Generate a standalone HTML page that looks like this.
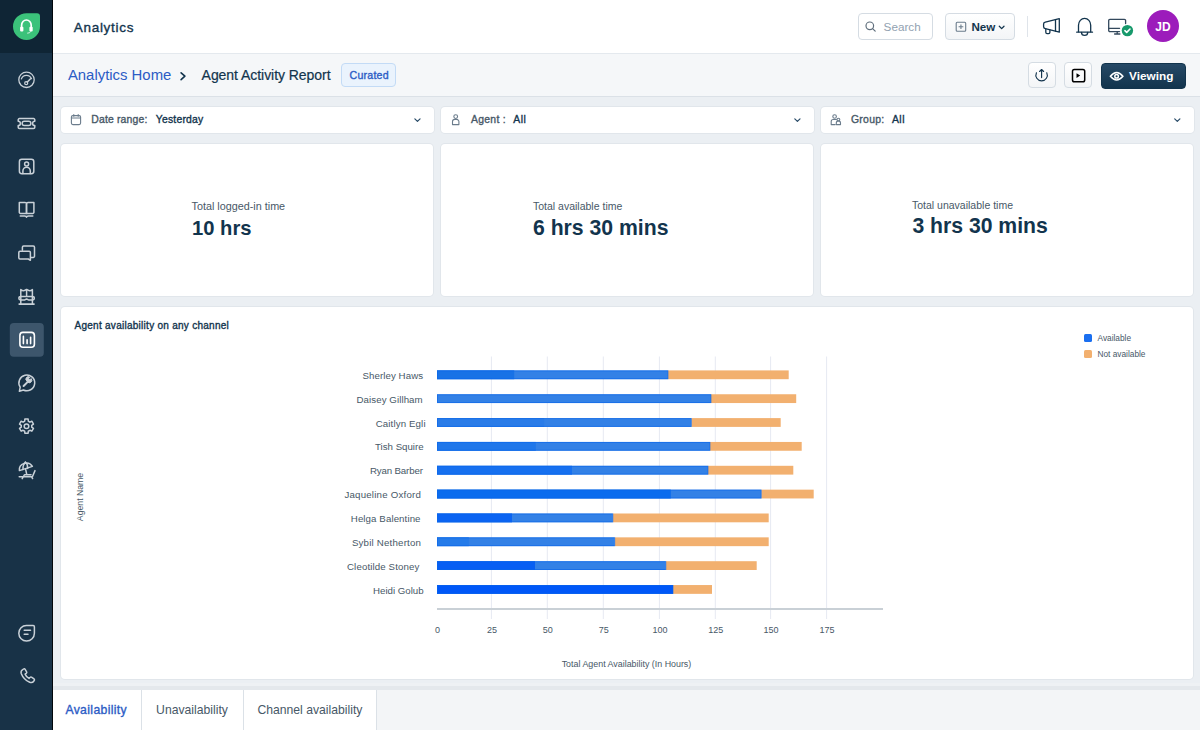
<!DOCTYPE html>
<html><head><meta charset="utf-8">
<style>
*{box-sizing:border-box;margin:0;padding:0}
html,body{width:1200px;height:730px;overflow:hidden;font-family:"Liberation Sans",sans-serif;background:#ebeff3;color:#12344d}
.a{position:absolute}
.t{position:absolute;white-space:nowrap}
svg{position:absolute;left:0;top:0;overflow:visible}
.box{position:absolute;background:#fff;border-radius:4px;box-shadow:0 0 0 1px #e1e6eb}
</style></head><body>
<div class="a" style="left:0;top:0;width:52px;height:730px;background:#183247"></div>
<div class="a" style="left:0;top:0;width:52px;height:53px;background:#0f2535"></div>
<div class="a" style="left:52px;top:0;width:1px;height:730px;background:#02070b"></div>
<div class="a" style="left:53px;top:0;width:1147px;height:54px;background:#fff;border-bottom:1px solid #e4e9ee"></div>
<div class="a" style="left:53px;top:54px;width:1147px;height:43px;background:#f5f7f9;border-bottom:1px solid #dbe1e7"></div>
<div class="box" style="left:61px;top:107px;width:373px;height:26px"></div>
<div class="box" style="left:61px;top:144px;width:372px;height:152px"></div>
<div class="box" style="left:441px;top:107px;width:373px;height:26px"></div>
<div class="box" style="left:441px;top:144px;width:372px;height:152px"></div>
<div class="box" style="left:821px;top:107px;width:373px;height:26px"></div>
<div class="box" style="left:821px;top:144px;width:372px;height:152px"></div>
<div class="box" style="left:61px;top:306.5px;width:1132px;height:372.5px"></div>
<div class="a" style="left:53px;top:683px;width:1147px;height:3px;background:#eef1f4"></div>
<div class="a" style="left:53px;top:686px;width:1147px;height:4px;background:#e4e8ec"></div>
<div class="a" style="left:53px;top:690px;width:1147px;height:40px;background:#f3f5f7"></div>
<div class="a" style="left:53px;top:690px;width:89px;height:40px;background:#fff;border-right:1px solid #dbe1e7"></div>
<div class="a" style="left:142px;top:690px;width:102px;height:40px;background:#fff;border-right:1px solid #dbe1e7"></div>
<div class="a" style="left:244px;top:690px;width:133px;height:40px;background:#fff;border-right:1px solid #dbe1e7"></div>
<div class="t" style="left:65.40px;top:704px;font-size:12.2px;line-height:12.2px;color:#2c5cc5;font-weight:normal;-webkit-text-stroke:0.35px #2c5cc5;letter-spacing:0.36px;">Availability</div>
<div class="t" style="left:156.10px;top:704px;font-size:12.2px;line-height:12.2px;color:#475867;font-weight:normal;">Unavailability</div>
<div class="t" style="left:257.40px;top:704px;font-size:12.2px;line-height:12.2px;color:#475867;font-weight:normal;">Channel availability</div>
<div class="t" style="left:73.80px;top:21px;font-size:13.5px;line-height:13.5px;color:#12344d;font-weight:normal;-webkit-text-stroke:0.35px #12344d;letter-spacing:0.7px;">Analytics</div>
<div class="a" style="left:858px;top:13px;width:75px;height:27px;border:1px solid #d5dce3;border-radius:4px;background:#fff"></div>
<div class="t" style="left:883.60px;top:21px;font-size:11.7px;line-height:11.7px;color:#92a2b1;font-weight:normal;">Search</div>
<div class="a" style="left:945px;top:13px;width:70px;height:27px;border:1px solid #d5dce3;border-radius:4px;background:linear-gradient(#fff,#f3f5f7)"></div>
<div class="t" style="left:971.50px;top:21px;font-size:11.6px;line-height:11.6px;color:#12344d;font-weight:bold;">New</div>
<div class="a" style="left:1027px;top:16px;width:1px;height:21px;background:#dfe4ea"></div>
<div class="a" style="left:1147px;top:10px;width:32px;height:32px;border-radius:50%;background:#9c1cbb"></div>
<div class="t" style="left:1063.00px;width:200px;text-align:center;top:21px;font-size:12px;line-height:12px;color:#fff;font-weight:bold;">JD</div>
<div class="t" style="left:67.90px;top:68px;font-size:14.9px;line-height:14.9px;color:#2c5cc5;font-weight:normal;">Analytics Home</div>
<div class="t" style="left:201.60px;top:68px;font-size:14px;line-height:14px;color:#12344d;font-weight:normal;-webkit-text-stroke:0.2px #12344d;letter-spacing:-0.05px;">Agent Activity Report</div>
<div class="a" style="left:341px;top:63px;width:55px;height:24px;border:1px solid #c3dbf6;border-radius:4px;background:#eaf3fd"></div>
<div class="t" style="left:349.60px;top:70px;font-size:10.6px;line-height:10.6px;color:#2c5cc5;font-weight:normal;-webkit-text-stroke:0.35px #2c5cc5;letter-spacing:0.22px;">Curated</div>
<div class="a" style="left:1028px;top:62px;width:28px;height:26px;border:1px solid #d5dce3;border-radius:4px;background:linear-gradient(#fff,#f3f5f7)"></div>
<div class="a" style="left:1064px;top:62px;width:28px;height:26px;border:1px solid #d5dce3;border-radius:4px;background:linear-gradient(#fff,#f3f5f7)"></div>
<div class="a" style="left:1101px;top:63px;width:85px;height:26px;border:1px solid #12344d;border-radius:4px;background:linear-gradient(#264966,#12344d)"></div>
<div class="t" style="left:1129.00px;top:71px;font-size:11.8px;line-height:11.8px;color:#fff;font-weight:bold;">Viewing</div>
<div class="t" style="left:91.30px;top:115px;font-size:10.4px;line-height:10.4px;color:#475867;font-weight:normal;-webkit-text-stroke:0.35px #475867;letter-spacing:0.17px;">Date range:</div>
<div class="t" style="left:155.70px;top:115px;font-size:10.4px;line-height:10.4px;color:#12344d;font-weight:normal;-webkit-text-stroke:0.35px #12344d;letter-spacing:0.22px;">Yesterday</div>
<div class="t" style="left:471.00px;top:115px;font-size:10.4px;line-height:10.4px;color:#475867;font-weight:normal;-webkit-text-stroke:0.35px #475867;letter-spacing:0.29px;">Agent :</div>
<div class="t" style="left:513.30px;top:115px;font-size:10.4px;line-height:10.4px;color:#12344d;font-weight:normal;-webkit-text-stroke:0.35px #12344d;letter-spacing:0.5px;">All</div>
<div class="t" style="left:851.00px;top:115px;font-size:10.4px;line-height:10.4px;color:#475867;font-weight:normal;-webkit-text-stroke:0.35px #475867;letter-spacing:0.27px;">Group:</div>
<div class="t" style="left:891.90px;top:115px;font-size:10.4px;line-height:10.4px;color:#12344d;font-weight:normal;-webkit-text-stroke:0.35px #12344d;letter-spacing:0.5px;">All</div>
<div class="t" style="left:191.50px;top:201px;font-size:10.8px;line-height:10.8px;color:#475867;font-weight:normal;">Total logged-in time</div>
<div class="t" style="left:192.00px;top:218px;font-size:20.2px;line-height:20.2px;color:#12344d;font-weight:bold;">10 hrs</div>
<div class="t" style="left:533.00px;top:201px;font-size:10.5px;line-height:10.5px;color:#475867;font-weight:normal;">Total available time</div>
<div class="t" style="left:533.00px;top:217px;font-size:21.2px;line-height:21.2px;color:#12344d;font-weight:bold;">6 hrs 30 mins</div>
<div class="t" style="left:912.00px;top:200px;font-size:10.5px;line-height:10.5px;color:#475867;font-weight:normal;">Total unavailable time</div>
<div class="t" style="left:912.40px;top:215px;font-size:21.2px;line-height:21.2px;color:#12344d;font-weight:bold;">3 hrs 30 mins</div>
<div class="t" style="left:74.50px;top:321px;font-size:10px;line-height:10px;color:#12344d;font-weight:normal;-webkit-text-stroke:0.35px #12344d;letter-spacing:0.27px;">Agent availability on any channel</div>
<svg width="1200" height="730" style="left:0;top:0">
<line x1="491.4" y1="356.5" x2="491.4" y2="619" stroke="#e6e9f2" stroke-width="1"/>
<line x1="547.3" y1="356.5" x2="547.3" y2="619" stroke="#e6e9f2" stroke-width="1"/>
<line x1="603.3" y1="356.5" x2="603.3" y2="619" stroke="#e6e9f2" stroke-width="1"/>
<line x1="659.4" y1="356.5" x2="659.4" y2="619" stroke="#e6e9f2" stroke-width="1"/>
<line x1="715.3" y1="356.5" x2="715.3" y2="619" stroke="#e6e9f2" stroke-width="1"/>
<line x1="770.6" y1="356.5" x2="770.6" y2="619" stroke="#e6e9f2" stroke-width="1"/>
<line x1="826.6" y1="356.5" x2="826.6" y2="619" stroke="#e6e9f2" stroke-width="1"/>
<line x1="437" y1="609" x2="883" y2="609" stroke="#c9d0d6" stroke-width="2"/>
<rect x="668" y="370.4" width="120.70000000000005" height="8.8" fill="#f2b06f"/>
<rect x="437" y="370.4" width="231" height="8.8" fill="#3381e6"/>
<rect x="437" y="370.4" width="77.20000000000005" height="8.8" fill="#1872e6"/>
<rect x="437.5" y="370.9" width="230.5" height="7.800000000000001" fill="none" stroke="#0a66ea" stroke-width="1" stroke-opacity="0.6"/>
<rect x="711" y="394.25" width="85.20000000000005" height="8.8" fill="#f2b06f"/>
<rect x="437" y="394.25" width="274" height="8.8" fill="#3381e6"/>
<rect x="437.5" y="394.75" width="273.5" height="7.800000000000001" fill="none" stroke="#0a66ea" stroke-width="1" stroke-opacity="0.6"/>
<rect x="691.3" y="418.09999999999997" width="89.40000000000009" height="8.8" fill="#f2b06f"/>
<rect x="437" y="418.09999999999997" width="254.29999999999995" height="8.8" fill="#3381e6"/>
<rect x="437" y="418.09999999999997" width="107.20000000000005" height="8.8" fill="#2a7ce8"/>
<rect x="437.5" y="418.59999999999997" width="253.79999999999995" height="7.800000000000001" fill="none" stroke="#0a66ea" stroke-width="1" stroke-opacity="0.6"/>
<rect x="710" y="441.95" width="91.70000000000005" height="8.8" fill="#f2b06f"/>
<rect x="437" y="441.95" width="273" height="8.8" fill="#3381e6"/>
<rect x="437" y="441.95" width="98.79999999999995" height="8.8" fill="#1f77ea"/>
<rect x="437.5" y="442.45" width="272.5" height="7.800000000000001" fill="none" stroke="#0a66ea" stroke-width="1" stroke-opacity="0.6"/>
<rect x="708" y="465.79999999999995" width="85.29999999999995" height="8.8" fill="#f2b06f"/>
<rect x="437" y="465.79999999999995" width="271" height="8.8" fill="#3381e6"/>
<rect x="437" y="465.79999999999995" width="135" height="8.8" fill="#1670ef"/>
<rect x="437.5" y="466.29999999999995" width="270.5" height="7.800000000000001" fill="none" stroke="#0a66ea" stroke-width="1" stroke-opacity="0.6"/>
<rect x="761.2" y="489.65" width="52.5" height="8.8" fill="#f2b06f"/>
<rect x="437" y="489.65" width="324.20000000000005" height="8.8" fill="#3381e6"/>
<rect x="437" y="489.65" width="233.79999999999995" height="8.8" fill="#0a6cee"/>
<rect x="437.5" y="490.15" width="323.70000000000005" height="7.800000000000001" fill="none" stroke="#0a66ea" stroke-width="1" stroke-opacity="0.6"/>
<rect x="612.8" y="513.5" width="155.9000000000001" height="8.8" fill="#f2b06f"/>
<rect x="437" y="513.5" width="175.79999999999995" height="8.8" fill="#3381e6"/>
<rect x="437" y="513.5" width="75" height="8.8" fill="#0b64f2"/>
<rect x="437.5" y="514.0" width="175.29999999999995" height="7.800000000000001" fill="none" stroke="#0a66ea" stroke-width="1" stroke-opacity="0.6"/>
<rect x="614.7" y="537.35" width="154.0" height="8.8" fill="#f2b06f"/>
<rect x="437" y="537.35" width="177.70000000000005" height="8.8" fill="#3381e6"/>
<rect x="437" y="537.35" width="31.80000000000001" height="8.8" fill="#257be9"/>
<rect x="437.5" y="537.85" width="177.20000000000005" height="7.800000000000001" fill="none" stroke="#0a66ea" stroke-width="1" stroke-opacity="0.6"/>
<rect x="665.8" y="561.2" width="90.90000000000009" height="8.8" fill="#f2b06f"/>
<rect x="437" y="561.2" width="228.79999999999995" height="8.8" fill="#3381e6"/>
<rect x="437" y="561.2" width="98" height="8.8" fill="#075ff3"/>
<rect x="437.5" y="561.7" width="228.29999999999995" height="7.800000000000001" fill="none" stroke="#0a66ea" stroke-width="1" stroke-opacity="0.6"/>
<rect x="673" y="585.05" width="39" height="8.8" fill="#f2b06f"/>
<rect x="437" y="585.05" width="236" height="8.8" fill="#3381e6"/>
<rect x="437" y="585.05" width="236" height="8.8" fill="#0057f8"/>
<rect x="437.5" y="585.55" width="235.5" height="7.800000000000001" fill="none" stroke="#0a66ea" stroke-width="1" stroke-opacity="0.6"/>
</svg>
<div class="t" style="left:362.50px;top:371px;font-size:9.7px;line-height:9.7px;color:#475867;font-weight:normal;letter-spacing:0.073px;">Sherley Haws</div>
<div class="t" style="left:356.50px;top:395px;font-size:9.7px;line-height:9.7px;color:#475867;font-weight:normal;letter-spacing:0.077px;">Daisey Gillham</div>
<div class="t" style="left:375.70px;top:419px;font-size:9.7px;line-height:9.7px;color:#475867;font-weight:normal;letter-spacing:0.127px;">Caitlyn Egli</div>
<div class="t" style="left:375.00px;top:442px;font-size:9.7px;line-height:9.7px;color:#475867;font-weight:normal;letter-spacing:0.0px;">Tish Squire</div>
<div class="t" style="left:370.00px;top:466px;font-size:9.7px;line-height:9.7px;color:#475867;font-weight:normal;letter-spacing:-0.15px;">Ryan Barber</div>
<div class="t" style="left:344.40px;top:490px;font-size:9.7px;line-height:9.7px;color:#475867;font-weight:normal;letter-spacing:0.213px;">Jaqueline Oxford</div>
<div class="t" style="left:350.80px;top:514px;font-size:9.7px;line-height:9.7px;color:#475867;font-weight:normal;letter-spacing:0.093px;">Helga Balentine</div>
<div class="t" style="left:351.90px;top:538px;font-size:9.7px;line-height:9.7px;color:#475867;font-weight:normal;letter-spacing:0.204px;">Sybil Netherton</div>
<div class="t" style="left:347.00px;top:562px;font-size:9.7px;line-height:9.7px;color:#475867;font-weight:normal;letter-spacing:0.12px;">Cleotilde Stoney</div>
<div class="t" style="left:373.00px;top:586px;font-size:9.7px;line-height:9.7px;color:#475867;font-weight:normal;letter-spacing:0.0px;">Heidi Golub</div>
<div class="t" style="left:337.50px;width:200px;text-align:center;top:626px;font-size:9px;line-height:9px;color:#475867;font-weight:normal;">0</div>
<div class="t" style="left:391.90px;width:200px;text-align:center;top:626px;font-size:9px;line-height:9px;color:#475867;font-weight:normal;">25</div>
<div class="t" style="left:447.80px;width:200px;text-align:center;top:626px;font-size:9px;line-height:9px;color:#475867;font-weight:normal;">50</div>
<div class="t" style="left:503.80px;width:200px;text-align:center;top:626px;font-size:9px;line-height:9px;color:#475867;font-weight:normal;">75</div>
<div class="t" style="left:559.90px;width:200px;text-align:center;top:626px;font-size:9px;line-height:9px;color:#475867;font-weight:normal;">100</div>
<div class="t" style="left:615.80px;width:200px;text-align:center;top:626px;font-size:9px;line-height:9px;color:#475867;font-weight:normal;">125</div>
<div class="t" style="left:671.10px;width:200px;text-align:center;top:626px;font-size:9px;line-height:9px;color:#475867;font-weight:normal;">150</div>
<div class="t" style="left:727.10px;width:200px;text-align:center;top:626px;font-size:9px;line-height:9px;color:#475867;font-weight:normal;">175</div>
<div class="t" style="left:561.70px;top:660px;font-size:8.9px;line-height:8.9px;color:#475867;font-weight:normal;">Total Agent Availability (In Hours)</div>
<div class="t" style="left:80px;top:497px;width:0;height:0"><div style="position:absolute;left:-30px;top:-5px;width:60px;text-align:center;font-size:8.7px;line-height:10px;color:#475867;transform:rotate(-90deg)">Agent Name</div></div>
<div class="a" style="left:1084px;top:334px;width:7.5px;height:7.5px;border-radius:1.5px;background:#1a6ff0"></div>
<div class="a" style="left:1084px;top:350px;width:7.5px;height:7.5px;border-radius:1.5px;background:#f2b06f"></div>
<div class="t" style="left:1097.50px;top:334px;font-size:8.3px;line-height:8.3px;color:#475867;font-weight:normal;">Available</div>
<div class="t" style="left:1097.50px;top:350px;font-size:8.3px;line-height:8.3px;color:#475867;font-weight:normal;">Not available</div>
<svg width="1200" height="730">
<path d="M13,26.6 A13.5,13.4 0 0 1 26.5,13.2 H37 A3,3 0 0 1 40,16.2 V26.6 A13.5,13.4 0 0 1 26.5,40 A13.5,13.4 0 0 1 13,26.6 Z" fill="#3bc27a"/>
<path d="M21.6,28.5 V25.2 A4.8,5.2 0 0 1 31.2,25.2 V28.5" fill="none" stroke="#fff" stroke-width="1.7"/>
<rect x="20.1" y="26.8" width="3.3" height="4.8" rx="1" fill="#fff"/><rect x="29.4" y="26.8" width="3.3" height="4.8" rx="1" fill="#fff"/>
<path d="M30.6,31.3 Q30.3,33.2 27.2,33.2" fill="none" stroke="#dff5e8" stroke-width="0.9"/>
<g fill="none" stroke="#c9d1d8" stroke-width="1.3" stroke-linecap="round"><circle cx="26.5" cy="79.8" r="7.7"/><path d="M21.4,78.9 A5.4,5.4 0 0 1 31.5,78.7"/><circle cx="26.2" cy="83.2" r="1.5"/><path d="M27.3,82.1 L30.3,78.9" stroke-width="1.5"/></g>
<g fill="none" stroke="#c9d1d8" stroke-width="1.5" stroke-linecap="round" stroke-linejoin="round"><path d="M19.4,118.6 H33.6 A1.2,1.2 0 0 1 34.8,119.8 V121.2 A2.2,2.2 0 0 0 34.8,125.6 V127.2 A1.2,1.2 0 0 1 33.6,128.4 H19.4 A1.2,1.2 0 0 1 18.2,127.2 V125.6 A2.2,2.2 0 0 0 18.2,121.2 V119.8 A1.2,1.2 0 0 1 19.4,118.6 Z"/><rect x="22.2" y="121.3" width="8.6" height="4.2" rx="2"/></g>
<g fill="none" stroke="#c9d1d8" stroke-width="1.5" stroke-linecap="round" stroke-linejoin="round"><rect x="19.4" y="159.3" width="14.4" height="14.4" rx="2.4"/><circle cx="26.6" cy="164" r="2"/><path d="M22.9,173.6 V171 A3.7,3.7 0 0 1 30.3,171 V173.6"/></g>
<g fill="none" stroke="#c9d1d8" stroke-width="1.5" stroke-linecap="round" stroke-linejoin="round"><path d="M19.3,202.4 H25 A1.5,1.5 0 0 1 26.5,203.9 V213.4 H20.4 A1.1,1.1 0 0 1 19.3,212.3 Z"/><path d="M33.9,202.4 H28 A1.5,1.5 0 0 0 26.5,203.9 V213.4 H32.8 A1.1,1.1 0 0 0 33.9,212.3 Z"/><path d="M20.3,216 H24.5 Q26.5,216 26.5,217.3 Q26.5,216 28.5,216 H32.8"/></g>
<g fill="none" stroke="#c9d1d8" stroke-width="1.5" stroke-linecap="round" stroke-linejoin="round"><path d="M22.4,250.2 V247.2 A1.2,1.2 0 0 1 23.6,246 H33.3 A1.2,1.2 0 0 1 34.5,247.2 V256.2 A1.2,1.2 0 0 1 33.3,257.4 H30.9"/><path d="M20,251.2 H29.2 A1.2,1.2 0 0 1 30.4,252.4 V260.3 L28.3,259 H20 A1.2,1.2 0 0 1 18.8,257.8 V252.4 A1.2,1.2 0 0 1 20,251.2 Z"/></g>
<g fill="none" stroke="#c9d1d8" stroke-width="1.5" stroke-linecap="round" stroke-linejoin="round"><path d="M20.8,303.6 V289.6 Q23.6,291.8 26.6,289.4 Q29.6,291.8 32.4,289.6 V303.6"/><path d="M26.6,290 V295.4"/><path d="M18.9,298.2 Q18.9,296.6 21,296.6 H32.2 Q34.3,296.6 34.3,298.2 Q34.3,299.9 32.2,299.9 H28.4 L26.6,299 L24.8,299.9 H21 Q18.9,299.9 18.9,298.2 Z"/><path d="M19.2,304.1 H34" stroke-width="1.7"/></g>
<rect x="9.8" y="323" width="34" height="33.7" rx="4" fill="#3d566c"/>
<g fill="none" stroke="#fff" stroke-width="1.6" stroke-linecap="round"><rect x="19.9" y="332.4" width="14.5" height="14.9" rx="3"/><path d="M23.4,336.4 V343.6 M27.1,339.8 V343.6 M30.6,337.2 V343.6"/></g>
<g fill="none" stroke="#c9d1d8" stroke-width="1.5" stroke-linecap="round" stroke-linejoin="round"><path d="M20.2,387.2 A7.9,7.9 0 1 1 23.4,390 L19.4,391.2 Z"/><path d="M23.6,386 L28,381.6" stroke-width="2"/><path d="M27.6,382 A2.4,2.4 0 0 0 31.1,378.6 L29.8,379.9 L28.6,378.7 L29.9,377.4 A2.4,2.4 0 0 0 26.6,380.9 Z" fill="#c9d1d8" stroke-width="1"/></g>
<g fill="none" stroke="#c9d1d8" stroke-width="1.5" stroke-linecap="round" stroke-linejoin="round"><path d="M23.85,421.61 L24.69,421.22 L24.86,419.09 L28.14,419.09 L28.31,421.22 L29.15,421.61 L29.91,422.14 L31.84,421.22 L33.48,424.07 L31.72,425.28 L31.80,426.20 L31.72,427.12 L33.48,428.33 L31.84,431.18 L29.91,430.26 L29.15,430.79 L28.31,431.18 L28.14,433.31 L24.86,433.31 L24.69,431.18 L23.85,430.79 L23.09,430.26 L21.16,431.18 L19.52,428.33 L21.28,427.12 L21.20,426.20 L21.28,425.28 L19.52,424.07 L21.16,421.22 L23.09,422.14 Z"/><circle cx="26.5" cy="426.2" r="2.3"/></g>
<g fill="none" stroke="#c9d1d8" stroke-width="1.5" stroke-linecap="round" stroke-linejoin="round"><path d="M19.4,470.6 A7,6.8 0 0 1 32.4,466.4 Z"/><path d="M23,469.6 Q22.6,465 25.4,462 M27.6,468.4 Q28,464.4 25.4,462"/><path d="M25.6,469.2 L26.8,474.6 M25,474.7 H31 M19.2,476.7 H32.4 L35,470.6 M24.4,474.8 L22.2,478.6 M31.6,476.9 L32.6,478.5"/></g>
<g fill="none" stroke="#c9d1d8" stroke-width="1.5" stroke-linecap="round" stroke-linejoin="round"><path d="M18.8,633.2 A7.6,7.6 0 0 1 26.4,625.6 H33.2 A1.2,1.2 0 0 1 34.4,626.8 V633.2 A7.8,7.8 0 0 1 26.6,641 A7.8,7.8 0 0 1 18.8,633.2 Z"/><path d="M24.2,630.3 H30.5 M24.2,634.2 H28"/></g>
<g fill="none" stroke="#c9d1d8" stroke-width="1.5" stroke-linecap="round" stroke-linejoin="round"><path d="M22.4,669.9 L23.6,669 A1,1 0 0 1 25,669.2 L26.6,671.8 A1,1 0 0 1 26.4,673.1 L25.1,674.1 Q26.3,677 29,678.4 L30.2,677.3 A1,1 0 0 1 31.5,677.2 L34,678.9 A1,1 0 0 1 34.3,680.3 L33.5,681.5 Q32.4,683.2 29.7,682.3 Q23.6,679.5 21.2,673.4 Q20.6,671 22.4,669.9 Z"/></g>
<g fill="none" stroke="#5f6e7c" stroke-width="1.2" stroke-linecap="round"><circle cx="869.8" cy="25.8" r="3.8"/><path d="M872.6,28.6 L875.2,31.2"/></g>
<g fill="none" stroke="#6b7c8c" stroke-width="1.1"><rect x="956.2" y="22.2" width="9.5" height="9" rx="1"/><path d="M960.95,24.4 V29 M958.6,26.7 H963.3"/></g>
<path d="M999.3,26.3 L1001.65,28.6 L1004,26.3" fill="none" stroke="#12344d" stroke-width="1.3" stroke-linecap="round" stroke-linejoin="round" stroke-width="1.2"/>
<g fill="none" stroke="#12344d" stroke-width="1.3" stroke-linecap="round" stroke-linejoin="round"><path d="M1059.3,18.6 V32.2 L1045.3,28.7 Q1043.6,28.3 1043.6,26.8 V24 Q1043.6,22.6 1045.3,22.2 Z"/><path d="M1055.5,19.8 V31.2"/><path d="M1045.8,29 V32.3 Q1045.8,33.6 1047.1,33.6 H1048.6 Q1049.9,33.6 1049.9,32.3 V29.9"/></g>
<g fill="none" stroke="#12344d" stroke-width="1.3" stroke-linecap="round" stroke-linejoin="round"><path d="M1078.5,31.8 V25.2 A6.1,6.8 0 0 1 1090.7,25.2 V31.8"/><path d="M1076.7,32.2 H1092.5"/><path d="M1081.5,32.5 A3,2.8 0 0 0 1087.7,32.5"/></g>
<g fill="none" stroke="#33485c" stroke-width="1.3" stroke-linecap="round" stroke-linejoin="round"><path d="M1125.6,23.5 V20.6 A1.2,1.2 0 0 0 1124.4,19.4 H1109.9 A1.2,1.2 0 0 0 1108.7,20.6 V30.4 A1.2,1.2 0 0 0 1109.9,31.6 H1119.5"/><path d="M1108.9,28.3 H1119.6"/><path d="M1117.2,31.8 V33.8 M1114.6,34 H1119.9"/></g>
<circle cx="1127.4" cy="30.6" r="5.7" fill="#17996b"/><path d="M1124.9,30.7 L1126.7,32.4 L1130,29" fill="none" stroke="#fff" stroke-width="1.6" stroke-linecap="round" stroke-linejoin="round"/>
<path d="M181.1,72.8 L184.9,76.2 L181.1,79.6" fill="none" stroke="#12344d" stroke-width="1.6" stroke-linecap="round" stroke-linejoin="round"/>
<g fill="none" stroke="#12344d" stroke-width="1.15" stroke-linecap="round" stroke-linejoin="round"><path d="M1036.43,72.79 A5.7,5.7 0 1 0 1046.77,72.79"/><path d="M1041.6,77.6 V69.5 M1039.6,71.5 L1041.6,69.5 L1043.6,71.5"/></g>
<rect x="1072.5" y="69.5" width="12.2" height="12.2" rx="1.8" fill="none" stroke="#000" stroke-width="1.5"/><path d="M1076.5,73.3 L1080.2,75.6 L1076.5,77.9 Z" fill="#000"/>
<g fill="none" stroke="#fff" stroke-width="1.5"><path d="M1110.4,76.2 Q1116.6,68.6 1122.9,76.2 Q1116.6,83.6 1110.4,76.2 Z"/><circle cx="1116.6" cy="76.2" r="1.8"/></g>
<g fill="none" stroke="#6b7c8c" stroke-width="1.1" stroke-linecap="round" stroke-linejoin="round"><rect x="71.4" y="115.6" width="9.2" height="9" rx="1.5"/><path d="M71.5,118 H80.5 M73.8,114.6 V116.2 M78.2,114.6 V116.2"/></g>
<g fill="none" stroke="#6b7c8c" stroke-width="1.1" stroke-linecap="round" stroke-linejoin="round"><circle cx="455.7" cy="116.6" r="1.9"/><path d="M452.5,124.6 V121.6 A2.2,2.2 0 0 1 454.7,119.4 H456.7 A2.2,2.2 0 0 1 458.9,121.6 V124.6 Z"/></g>
<g fill="none" stroke="#6b7c8c" stroke-width="1.1" stroke-linecap="round" stroke-linejoin="round"><circle cx="834.6" cy="116.5" r="1.8"/><path d="M836.4,119.5 H833.2 A2,2 0 0 0 831.2,121.5 V124.6 H835.2"/><circle cx="838.4" cy="119.6" r="1.4"/><path d="M836.3,124.6 V123 A2,2 0 0 1 840.5,123 V124.6 Z"/></g>
<path d="M414.85,118.9 L417.45,121.4 L420.05,118.9" fill="none" stroke="#264966" stroke-width="1.2" stroke-linecap="round" stroke-linejoin="round"/>
<path d="M794.80,118.9 L797.40,121.4 L800.00,118.9" fill="none" stroke="#264966" stroke-width="1.2" stroke-linecap="round" stroke-linejoin="round"/>
<path d="M1174.70,118.9 L1177.30,121.4 L1179.90,118.9" fill="none" stroke="#264966" stroke-width="1.2" stroke-linecap="round" stroke-linejoin="round"/>
</svg>
</body></html>
